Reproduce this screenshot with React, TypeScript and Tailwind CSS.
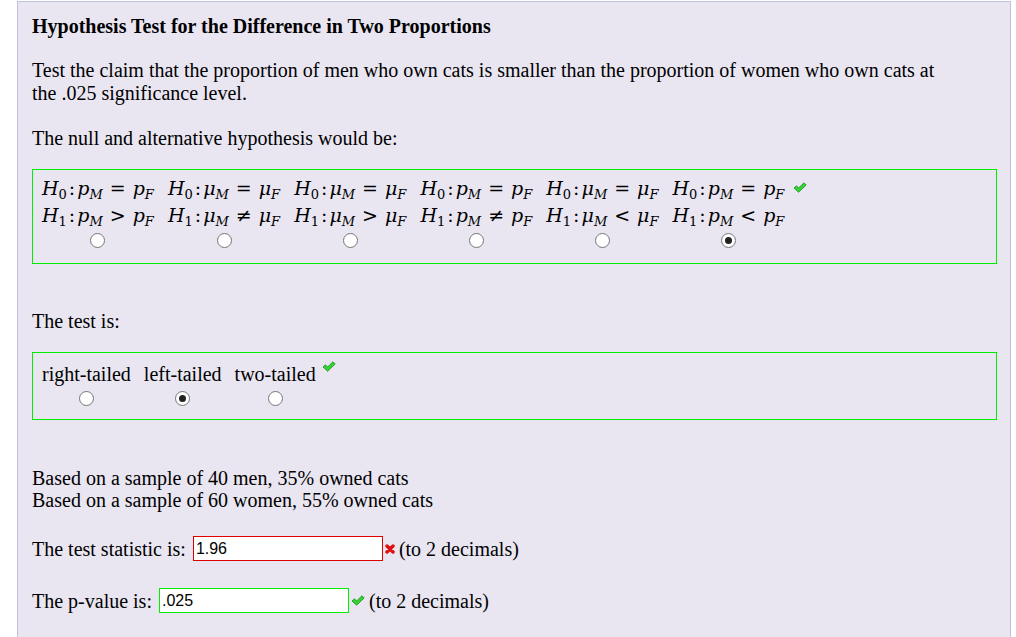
import React from "react";

type Hyp = { v: string; rel: string };

const options: Hyp[] = [
  { v: "p", rel: ">" },
  { v: "μ", rel: "≠" },
  { v: "μ", rel: ">" },
  { v: "p", rel: "≠" },
  { v: "μ", rel: "<" },
  { v: "p", rel: "<" },
];

const Check = () => (
  <svg width="14" height="11" viewBox="0 0 14 11" className="block">
    <path
      d="M1 6 L3.5 3.8 L5.6 6 L11 0.8 L13.2 3 L5.6 10.2 Z"
      fill="#33d633"
      stroke="#1a8a1a"
      strokeWidth="0.8"
      strokeLinejoin="round"
    />
  </svg>
);

const Cross = () => (
  <svg width="10" height="10" viewBox="0 0 10 10" className="block">
    <path d="M2 2 L8 8 M8 2 L2 8" stroke="#e01010" strokeWidth="3.4" strokeLinecap="round" />
  </svg>
);

const Radio = ({ on }: { on?: boolean }) => (
  <span className="flex w-[15px] h-[15px] rounded-full border border-[#767676] bg-white items-center justify-center">
    {on && <span className="w-[7px] h-[7px] rounded-full bg-[#222]" />}
  </span>
);

// one variable with its M/F subscript, e.g. p_M
const Var = ({ v, s }: { v: string; s: string }) => (
  <span>
    <i>{v}</i>
    <i className="text-[13px] leading-none relative top-[4px]">{s}</i>
  </span>
);

const Line = ({ n, v, rel }: { n: string; v: string; rel: string }) => (
  <div className="whitespace-nowrap h-[27px] leading-[27px]">
    <i>H</i>
    <span className="text-[13px] leading-none relative top-[4px]">{n}</span>
    <span className="mx-[2px]">:</span>
    <Var v={v} s="M" />
    <span className="mx-[7px]">{rel}</span>
    <Var v={v} s="F" />
  </div>
);

export default function App() {
  return (
    <div className="min-h-screen bg-white pt-px pl-[17px] pr-[5px] font-['Liberation_Serif',serif] text-[20px] text-black">
      <div className="border border-[#c0c0e0] bg-[#e9e6f2] px-[14px] pt-[13px] pb-[30px]">
        <h1 className="font-bold text-[20px] leading-[23px]">
          Hypothesis Test for the Difference in Two Proportions
        </h1>
        <p className="mt-[21px] leading-[23px] pr-[60px]">
          Test the claim that the proportion of men who own cats is smaller than the proportion of women who own cats at
          the .025 significance level.
        </p>
        <p className="mt-[22px] leading-[23px]">The null and alternative hypothesis would be:</p>

        <div className="mt-[19px] mr-[-1px] border border-[#00ee00] h-[95px] pl-[9px] pt-[5px]">
          <div className="flex gap-[14px] items-start font-['DejaVu_Serif',serif] text-[19px]">
            {options.map((o, i) => (
              <div key={i} className="flex flex-col items-center">
                <div>
                  <Line n="0" v={o.v} rel="=" />
                  <Line n="1" v={o.v} rel={o.rel} />
                </div>
                <div className="mt-[4px] flex">
                  <Radio on={i === 5} />
                </div>
              </div>
            ))}
            <div className="ml-[-5px] mt-[7px] flex">
              <Check />
            </div>
          </div>
        </div>

        <p className="mt-[46px] leading-[23px]">The test is:</p>

        <div className="mt-[19px] mr-[-1px] border border-[#00ee00] h-[68px] pl-[9px] pt-[10px]">
          <div className="flex gap-[13px] items-start">
            {["right-tailed", "left-tailed", "two-tailed"].map((t, i) => (
              <div key={t} className="flex flex-col items-center">
                <span className="leading-[23px]">{t}</span>
                <div className="mt-[5px] flex">
                  <Radio on={i === 1} />
                </div>
              </div>
            ))}
            <div className="ml-[-7px] mt-[-2px] flex">
              <Check />
            </div>
          </div>
        </div>

        <div className="mt-[47px] leading-[22px]">
          <div>Based on a sample of 40 men, 35% owned cats</div>
          <div>Based on a sample of 60 women, 55% owned cats</div>
        </div>

        <div className="mt-[25px] flex items-center h-[25px]">
          <span>The test statistic is:</span>
          <input
            readOnly
            value="1.96"
            className="ml-[7px] w-[190px] h-[25px] border border-[#e00000] bg-white px-[2px] font-['Liberation_Sans',sans-serif] text-[16px] outline-none"
          />
          <span className="ml-[2px] mr-[4px] flex items-center">
            <Cross />
          </span>
          <span>(to 2 decimals)</span>
        </div>

        <div className="mt-[27px] flex items-center h-[25px]">
          <span>The p-value is:</span>
          <input
            readOnly
            value=".025"
            className="ml-[7px] w-[190px] h-[25px] border border-[#00ee00] bg-white px-[2px] font-['Liberation_Sans',sans-serif] text-[16px] outline-none"
          />
          <span className="ml-[2px] mr-[4px] flex items-center">
            <Check />
          </span>
          <span>(to 2 decimals)</span>
        </div>
      </div>
    </div>
  );
}
